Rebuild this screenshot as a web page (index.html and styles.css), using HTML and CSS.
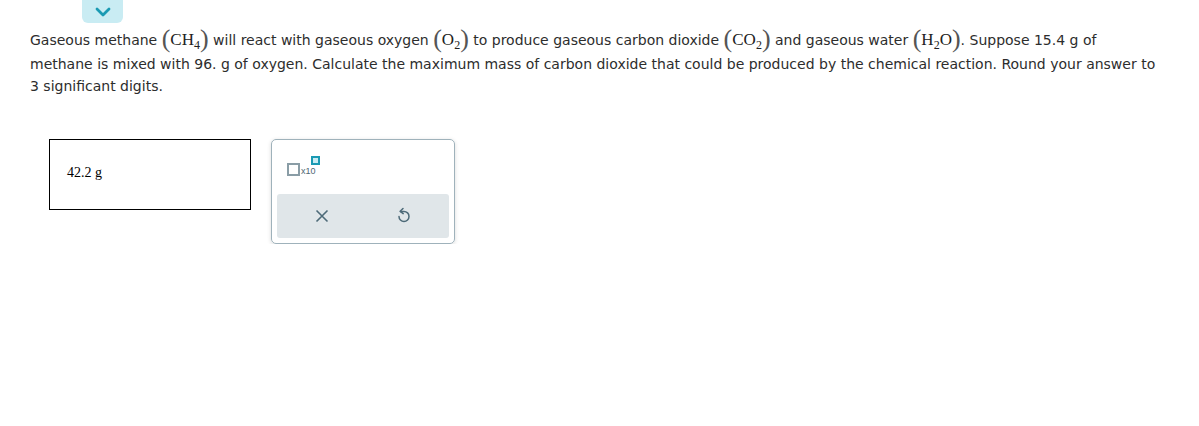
FILE: index.html
```html
<!DOCTYPE html>
<html>
<head>
<meta charset="utf-8">
<link rel="stylesheet" href="styles.css">
</head>
<body>
<div class="page">
  <div class="toggle-row">
    <button class="toggle" aria-label="collapse">
      <svg width="18" height="12" viewBox="0 0 18 12"><path d="M3 3 L9 9 L15 3" fill="none" stroke="#1a9ab3" stroke-width="2.8" stroke-linecap="round" stroke-linejoin="round"/></svg>
    </button>
  </div>
  <p class="question">Gaseous methane <span class="m"><span class="paren">(</span>CH<sub>4</sub><span class="paren">)</span></span> will react with gaseous oxygen <span class="m"><span class="paren">(</span>O<sub>2</sub><span class="paren">)</span></span> to produce gaseous carbon dioxide <span class="m"><span class="paren">(</span>CO<sub>2</sub><span class="paren">)</span></span> and gaseous water <span class="m"><span class="paren">(</span>H<sub>2</sub>O<span class="paren">)</span></span>. Suppose 15.4 g of methane is mixed with 96. g of oxygen. Calculate the maximum mass of carbon dioxide that could be produced by the chemical reaction. Round your answer to 3 significant digits.</p>
  <div class="answer-row">
    <div class="answer-box"><span class="answer">42.2&nbsp;g</span></div>
    <div class="palette">
      <div class="palette-top">
        <span class="sci">
          <span class="sq-big"></span><span class="x10">x10</span><span class="sq-small"></span>
        </span>
      </div>
      <div class="palette-bar">
        <button class="pbtn" aria-label="clear">
          <svg width="14" height="14" viewBox="0 0 14 14"><path d="M1.5 1.5 L12.5 12.5 M12.5 1.5 L1.5 12.5" stroke="#4d6a78" stroke-width="1.6" fill="none"/></svg>
        </button>
        <button class="pbtn" aria-label="undo">
          <svg width="14" height="18" viewBox="0 0 14 18"><path d="M6 1.5 L3.2 4.3 L6.2 6.6" fill="none" stroke="#4d6a78" stroke-width="1.5" stroke-linejoin="round" stroke-linecap="round"/><path d="M3.4 4.4 L7 4.4 A5 5 0 1 1 2 9.4" fill="none" stroke="#4d6a78" stroke-width="1.5" stroke-linecap="round"/></svg>
        </button>
      </div>
    </div>
  </div>
</div>
</body>
</html>
```

FILE: styles.css
```css
html, body {
  margin: 0;
  padding: 0;
  background: #ffffff;
}
.page {
  padding: 0 37px 0 30px;
  font-family: "DejaVu Sans", Verdana, sans-serif;
  font-size: 14px;
  color: #2d2d2d;
}
.toggle-row {
  padding-left: 52px;
  height: 23px;
}
.toggle {
  display: flex;
  align-items: center;
  justify-content: center;
  width: 41px;
  height: 23px;
  border: none;
  padding: 0;
  background: #c9ecf3;
  border-radius: 0 0 6px 6px;
}
.question {
  margin: 4px 0 0 0;
  line-height: 22px;
}
.m {
  font-family: "Liberation Serif", "Times New Roman", serif;
  font-size: 17px;
  line-height: 26px;
  color: #222;
  white-space: nowrap;
}
.m sub {
  font-size: 12px;
  vertical-align: -4px;
  line-height: 0;
}
.paren {
  font-family: "Liberation Serif", "Times New Roman", serif;
  font-size: 26px;
  color: #555;
  vertical-align: -2px;
  line-height: 0;
  margin: 0;
}
.answer-row {
  display: flex;
  align-items: flex-start;
  margin-top: 42px;
  padding-left: 19px;
  gap: 20px;
}
.answer-box {
  box-sizing: border-box;
  width: 202px;
  height: 71px;
  border: 1px solid #000;
  padding: 24px 0 0 17px;
}
.answer {
  font-family: "Liberation Serif", "Times New Roman", serif;
  font-size: 14px;
  color: #000;
}
.palette {
  box-sizing: border-box;
  width: 184px;
  height: 105px;
  border: 1px solid #9fb2bb;
  border-radius: 5px;
  box-shadow: 0 1px 4px rgba(0,0,0,0.15);
  padding: 0 5px 5px 5px;
  display: flex;
  flex-direction: column;
}
.palette-top {
  height: 54px;
  display: flex;
  align-items: flex-start;
}
.sci {
  position: relative;
  display: inline-flex;
  align-items: flex-end;
  margin: 23px 0 0 10px;
}
.sq-big {
  box-sizing: border-box;
  width: 13px;
  height: 13px;
  border: 2px solid #8a9da6;
  background: #fff;
}
.x10 {
  font-family: "Liberation Sans", Arial, sans-serif;
  font-size: 9px;
  color: #4e6773;
  line-height: 9px;
  margin-left: 1px;
}
.sq-small {
  box-sizing: border-box;
  position: absolute;
  left: 24px;
  top: -7px;
  width: 9px;
  height: 9px;
  border: 2px solid #1a9ab3;
  background: #c9ecf3;
}
.palette-bar {
  flex: 1;
  background: #e0e6e9;
  border-radius: 3px;
  display: flex;
  align-items: center;
  justify-content: space-around;
  padding: 0 4px;
}
.pbtn {
  border: none;
  background: transparent;
  padding: 0;
  display: flex;
  align-items: center;
  justify-content: center;
  width: 40px;
  height: 30px;
}
```
